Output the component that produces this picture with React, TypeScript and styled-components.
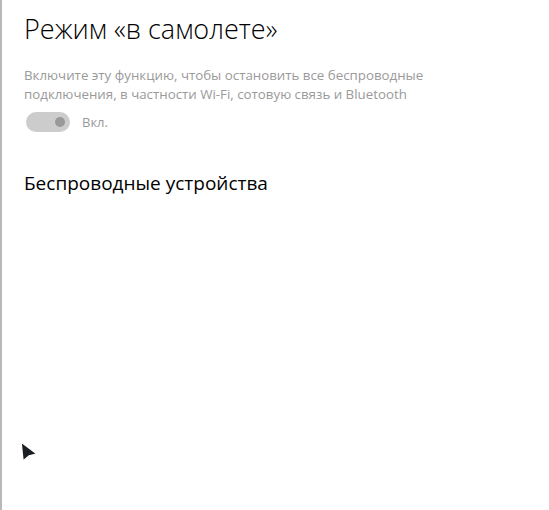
import React from "react";
import styled, { createGlobalStyle } from "styled-components";

const GlobalStyle = createGlobalStyle`
  html, body {
    margin: 0;
    padding: 0;
    background: #ffffff;
  }
  body {
    font-family: "Open Sans", "Noto Sans", "Liberation Sans", sans-serif;
  }
`;

const Window = styled.div`
  position: relative;
  width: 549px;
  height: 510px;
  box-sizing: border-box;
  border-left: 2px solid #bdb8b8;
  background: #ffffff;
  overflow: hidden;
`;

const Content = styled.div`
  display: flex;
  flex-direction: column;
  padding: 11px 0 0 22px;
`;

const Title = styled.h1`
  margin: 0;
  font-size: 27px;
  font-weight: 300;
  line-height: 36px;
  color: #000000;
`;

const Description = styled.p`
  margin: 19px 0 0 0;
  width: 430px;
  font-size: 13.3px;
  line-height: 19px;
  color: #9a9a9a;
`;

const ToggleRow = styled.div`
  display: flex;
  align-items: center;
  gap: 12px;
  margin-top: 8px;
  margin-left: 2px;
`;

const Track = styled.div<{ $on: boolean }>`
  display: flex;
  align-items: center;
  justify-content: ${(p) => (p.$on ? "flex-end" : "flex-start")};
  width: 44px;
  height: 20px;
  box-sizing: border-box;
  padding: 0 5px;
  border-radius: 10px;
  background: #cccccc;
`;

const Knob = styled.div`
  width: 10px;
  height: 10px;
  border-radius: 50%;
  background: #999999;
`;

const ToggleLabel = styled.span`
  font-size: 13px;
  color: #9a9a9a;
`;

const Subtitle = styled.h2`
  margin: 38px 0 0 0;
  font-size: 19px;
  font-weight: 400;
  line-height: 26px;
  color: #000000;
`;

const Cursor = styled.svg`
  position: absolute;
  left: 16px;
  top: 439px;
`;

export default function App() {
  return (
    <>
      <GlobalStyle />
      <Window>
        <Content>
          <Title>Режим «в самолете»</Title>
          <Description>
            Включите эту функцию, чтобы остановить все беспроводные подключения, в
            частности Wi-Fi, сотовую связь и Bluetooth
          </Description>
          <ToggleRow>
            <Track $on>
              <Knob />
            </Track>
            <ToggleLabel>Вкл.</ToggleLabel>
          </ToggleRow>
          <Subtitle>Беспроводные устройства</Subtitle>
        </Content>
        <Cursor width="24" height="26" viewBox="0 0 24 26">
          <polygon
            points="3,3 19,15 11,17 5,22"
            fill="#1a1d22"
            stroke="#ffffff"
            strokeWidth="1.5"
            strokeLinejoin="round"
          />
        </Cursor>
      </Window>
    </>
  );
}
